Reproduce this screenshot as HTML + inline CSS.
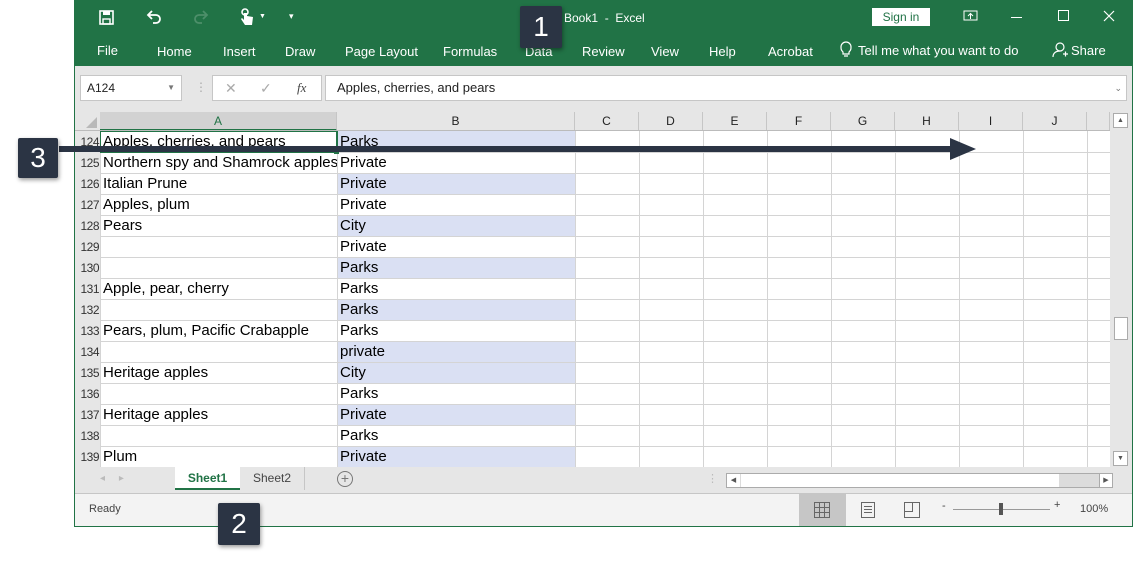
<!DOCTYPE html>
<html><head><meta charset="utf-8"><style>
*{margin:0;padding:0;box-sizing:border-box}
body{width:1133px;height:563px;background:#fff;position:relative;overflow:hidden;font-family:"Liberation Sans",sans-serif}
.a{position:absolute}
.g{color:#fff;font-size:12px}
.badge{position:absolute;background:#2b3444;color:#fff;font-size:28px;text-align:center;box-shadow:1px 2px 4px rgba(0,0,0,.4);border-radius:2px}
.cell{position:absolute;font-size:15px;color:#000;line-height:21px;white-space:nowrap;overflow:hidden}
.rh{position:absolute;left:75px;width:25px;font-size:12px;color:#333;text-align:right;padding-right:1px;line-height:22px;background:#e6e6e6;letter-spacing:-0.5px}
.ch{position:absolute;top:112px;height:19px;font-size:12px;text-align:center;line-height:19px;color:#222;border-right:1px solid #c6c6c6;background:#e6e6e6}
</style></head><body>
<div class="a" style="left:74px;top:0;width:1059px;height:527px;border:1px solid #217346;background:#e6e6e6"></div>
<div class="a" style="left:74px;top:0;width:1059px;height:66px;background:#217346"></div>
<svg class="a" style="left:98px;top:9px" width="18" height="18" viewBox="0 0 18 18"><rect x="2" y="2" width="13" height="13" fill="none" stroke="#fff" stroke-width="1.6"/><rect x="5" y="2" width="7" height="4" fill="#fff"/><rect x="5" y="10" width="7" height="5" fill="none" stroke="#fff" stroke-width="1.4"/></svg>
<svg class="a" style="left:145px;top:9px" width="18" height="16" viewBox="0 0 18 16"><path d="M4 6 H11 A4 4 0 0 1 11 14 H8" fill="none" stroke="#fff" stroke-width="1.8"/><path d="M7 2 L3 6 L7 10" fill="none" stroke="#fff" stroke-width="1.8"/></svg>
<svg class="a" style="left:192px;top:9px" width="18" height="16" viewBox="0 0 18 16"><path d="M14 6 H7 A4 4 0 0 0 7 14 H10" fill="none" stroke="#4d8f6a" stroke-width="1.8"/><path d="M11 2 L15 6 L11 10" fill="none" stroke="#4d8f6a" stroke-width="1.8"/></svg>
<svg class="a" style="left:240px;top:8px" width="14" height="18" viewBox="0 0 14 18"><circle cx="5" cy="4" r="3" fill="none" stroke="#fff" stroke-width="1.6"/><path d="M4 5V12L2 10L1 11L5 17H12L13 9L7 8V5Z" fill="#fff"/></svg>
<div class="a g" style="left:259px;top:13px;font-size:7px">▼</div>
<div class="a g" style="left:289px;top:11px;font-size:9px">▾</div>
<div class="a g" style="left:564px;top:11px;font-size:12px">Book1 &nbsp;- &nbsp;Excel</div>
<div class="a" style="left:872px;top:8px;width:58px;height:18px;background:#fff;color:#217346;font-size:12px;text-align:center;line-height:18px">Sign in</div>
<svg class="a" style="left:963px;top:10px" width="16" height="12"><rect x="1" y="1" width="13" height="9" fill="none" stroke="#fff"/><path d="M7.5 9 V4 M5 6 L7.5 3.5 L10 6" stroke="#fff" fill="none"/></svg>
<div class="a" style="left:1011px;top:17px;width:11px;height:1px;background:#fff"></div>
<div class="a" style="left:1058px;top:10px;width:11px;height:11px;border:1px solid #fff"></div>
<svg class="a" style="left:1103px;top:10px" width="12" height="12"><path d="M1 1L11 11M11 1L1 11" stroke="#fff" stroke-width="1.2"/></svg>
<div class="a g" style="left:97px;top:43px;font-size:13px">File</div>
<div class="a g" style="left:157px;top:44px;font-size:13px">Home</div>
<div class="a g" style="left:223px;top:44px;font-size:13px">Insert</div>
<div class="a g" style="left:285px;top:44px;font-size:13px">Draw</div>
<div class="a g" style="left:345px;top:44px;font-size:13px">Page Layout</div>
<div class="a g" style="left:443px;top:44px;font-size:13px">Formulas</div>
<div class="a g" style="left:525px;top:44px;font-size:13px">Data</div>
<div class="a g" style="left:582px;top:44px;font-size:13px">Review</div>
<div class="a g" style="left:651px;top:44px;font-size:13px">View</div>
<div class="a g" style="left:709px;top:44px;font-size:13px">Help</div>
<div class="a g" style="left:768px;top:44px;font-size:13px">Acrobat</div>
<svg class="a" style="left:840px;top:41px" width="12" height="17"><path d="M3 11C1 9 1 8 1 6A5 5 0 0 1 11 6C11 8 11 9 9 11V13H3Z M4 15H8" fill="none" stroke="#fff" stroke-width="1.2"/></svg>
<div class="a g" style="left:858px;top:43px;font-size:13px">Tell me what you want to do</div>
<svg class="a" style="left:1052px;top:41px" width="16" height="17"><circle cx="8" cy="6" r="4" fill="none" stroke="#fff" stroke-width="1.2"/><path d="M1 16C1 12 4 10 8 10 M11 13H16M13.5 10.5V15.5" fill="none" stroke="#fff" stroke-width="1.2"/></svg>
<div class="a g" style="left:1071px;top:43px;font-size:13px">Share</div>
<div class="a" style="left:80px;top:75px;width:102px;height:26px;background:#fff;border:1px solid #c6c6c6;font-size:12px;line-height:24px;padding-left:6px;color:#222">A124<span style="position:absolute;right:6px;font-size:8px;color:#777">▼</span></div>
<div class="a" style="left:195px;top:80px;color:#aaa;font-size:12px">⋮</div>
<div class="a" style="left:212px;top:75px;width:110px;height:26px;background:#fff;border:1px solid #c6c6c6;font-size:14px;line-height:24px;color:#aaa"><span style="position:absolute;left:12px">✕</span><span style="position:absolute;left:47px">✓</span><span style="position:absolute;left:84px;color:#444;font-family:'Liberation Serif';font-style:italic;font-size:13px">fx</span></div>
<div class="a" style="left:325px;top:75px;width:802px;height:26px;background:#fff;border:1px solid #c6c6c6;font-size:13px;line-height:24px;padding-left:11px;color:#222">Apples, cherries, and pears<span style="position:absolute;right:4px;font-size:9px;color:#777">⌄</span></div>
<div class="a" style="left:100px;top:131px;width:1010px;height:336px;background:#fff"></div>
<div class="a" style="left:75px;top:112px;width:25px;height:19px;background:#e6e6e6"><div style="position:absolute;right:3px;bottom:3px;width:0;height:0;border-left:11px solid transparent;border-bottom:11px solid #b9b9b9"></div></div>
<div class="ch" style="left:100px;width:237px;background:#d2d2d2;color:#217346;border-bottom:2px solid #217346">A</div>
<div class="ch" style="left:337px;width:238px">B</div>
<div class="ch" style="left:575px;width:64px">C</div>
<div class="ch" style="left:639px;width:64px">D</div>
<div class="ch" style="left:703px;width:64px">E</div>
<div class="ch" style="left:767px;width:64px">F</div>
<div class="ch" style="left:831px;width:64px">G</div>
<div class="ch" style="left:895px;width:64px">H</div>
<div class="ch" style="left:959px;width:64px">I</div>
<div class="ch" style="left:1023px;width:64px">J</div>
<div class="ch" style="left:1087px;width:23px"></div>
<div class="a" style="left:75px;top:130px;width:1035px;height:1px;background:#bbb"></div>
<svg class="a" style="left:75px;top:131px" width="1035" height="336">
<g fill="#dae0f3">
<rect x="262" y="0" width="238" height="21"/><rect x="262" y="42" width="238" height="21"/><rect x="262" y="84" width="238" height="21"/><rect x="262" y="126" width="238" height="21"/><rect x="262" y="168" width="238" height="21"/><rect x="262" y="210" width="238" height="42"/><rect x="262" y="273" width="238" height="21"/><rect x="262" y="315" width="238" height="21"/>
</g>
<g stroke="#d4d4d4" stroke-width="1">
<path d="M0 21.5H1035M0 42.5H1035M0 63.5H1035M0 84.5H1035M0 105.5H1035M0 126.5H1035M0 147.5H1035M0 168.5H1035M0 189.5H1035M0 210.5H1035M0 231.5H1035M0 252.5H1035M0 273.5H1035M0 294.5H1035M0 315.5H1035"/>
<path d="M25.5 0V336M262.5 0V336M500.5 0V336M564.5 0V336M628.5 0V336M692.5 0V336M756.5 0V336M820.5 0V336M884.5 0V336M948.5 0V336M1012.5 0V336"/>
</g>
<rect x="25" y="0" width="237" height="21" fill="none" stroke="#217346" stroke-width="2"/>
<rect x="259" y="18" width="5" height="5" fill="#217346"/>
</svg>
<div class="rh" style="top:131px">124</div><div class="rh" style="top:152px">125</div><div class="rh" style="top:173px">126</div><div class="rh" style="top:194px">127</div><div class="rh" style="top:215px">128</div><div class="rh" style="top:236px">129</div><div class="rh" style="top:257px">130</div><div class="rh" style="top:278px">131</div><div class="rh" style="top:299px">132</div><div class="rh" style="top:320px">133</div><div class="rh" style="top:341px">134</div><div class="rh" style="top:362px">135</div><div class="rh" style="top:383px">136</div><div class="rh" style="top:404px">137</div><div class="rh" style="top:425px">138</div><div class="rh" style="top:446px">139</div>
<div class="cell" style="left:103px;top:131px;width:233px">Apples, cherries, and pears</div>
<div class="cell" style="left:103px;top:152px;width:234px">Northern spy and Shamrock apples</div>
<div class="cell" style="left:103px;top:173px">Italian Prune</div>
<div class="cell" style="left:103px;top:194px">Apples, plum</div>
<div class="cell" style="left:103px;top:215px">Pears</div>
<div class="cell" style="left:103px;top:278px">Apple, pear, cherry</div>
<div class="cell" style="left:103px;top:320px">Pears, plum, Pacific Crabapple</div>
<div class="cell" style="left:103px;top:362px">Heritage apples</div>
<div class="cell" style="left:103px;top:404px">Heritage apples</div>
<div class="cell" style="left:103px;top:446px">Plum</div>
<div class="cell" style="left:340px;top:131px">Parks</div>
<div class="cell" style="left:340px;top:152px">Private</div>
<div class="cell" style="left:340px;top:173px">Private</div>
<div class="cell" style="left:340px;top:194px">Private</div>
<div class="cell" style="left:340px;top:215px">City</div>
<div class="cell" style="left:340px;top:236px">Private</div>
<div class="cell" style="left:340px;top:257px">Parks</div>
<div class="cell" style="left:340px;top:278px">Parks</div>
<div class="cell" style="left:340px;top:299px">Parks</div>
<div class="cell" style="left:340px;top:320px">Parks</div>
<div class="cell" style="left:340px;top:341px">private</div>
<div class="cell" style="left:340px;top:362px">City</div>
<div class="cell" style="left:340px;top:383px">Parks</div>
<div class="cell" style="left:340px;top:404px">Private</div>
<div class="cell" style="left:340px;top:425px">Parks</div>
<div class="cell" style="left:340px;top:446px">Private</div>
<div class="a" style="left:1111px;top:112px;width:19px;height:355px;background:#e6e6e6"></div>
<div class="a" style="left:1113px;top:113px;width:15px;height:15px;background:#fff;border:1px solid #ababab;font-size:7px;text-align:center;line-height:13px;color:#555">▲</div>
<div class="a" style="left:1114px;top:317px;width:14px;height:23px;background:#fff;border:1px solid #ababab"></div>
<div class="a" style="left:1113px;top:451px;width:15px;height:15px;background:#fff;border:1px solid #ababab;font-size:7px;text-align:center;line-height:13px;color:#555">▼</div>
<div class="a" style="left:75px;top:467px;width:1057px;height:27px;background:#e6e6e6;border-bottom:1px solid #c6c6c6"></div>
<div class="a" style="left:100px;top:473px;color:#bbb;font-size:10px">◂ &nbsp;&nbsp;&nbsp; ▸</div>
<div class="a" style="left:175px;top:467px;width:65px;height:23px;background:#fff;border-bottom:2px solid #217346;color:#217346;font-weight:bold;font-size:12px;text-align:center;line-height:23px">Sheet1</div>
<div class="a" style="left:240px;top:467px;width:65px;height:23px;font-size:12px;color:#444;text-align:center;line-height:23px;border-right:1px solid #c6c6c6">Sheet2</div>
<div class="a" style="left:337px;top:471px;width:16px;height:16px;border:1px solid #777;border-radius:50%;color:#777;font-size:14px;text-align:center;line-height:13px">+</div>
<div class="a" style="left:707px;top:472px;color:#bbb;font-size:11px">⋮</div>
<div class="a" style="left:726px;top:473px;width:387px;height:15px;background:#dcdcdc;border:1px solid #ababab"></div>
<div class="a" style="left:741px;top:474px;width:318px;height:13px;background:#fff"></div>
<div class="a" style="left:727px;top:474px;width:13px;height:13px;background:#fff;font-size:7px;color:#555;text-align:center;line-height:13px">◀</div>
<div class="a" style="left:1099px;top:474px;width:13px;height:13px;background:#fff;border-left:1px solid #ababab;font-size:7px;color:#555;text-align:center;line-height:13px">▶</div>
<div class="a" style="left:75px;top:494px;width:1057px;height:32px;background:#f3f3f3"></div>
<div class="a" style="left:89px;top:503px;font-size:11px;color:#444">Ready</div>
<div class="a" style="left:799px;top:494px;width:47px;height:32px;background:#c6c6c6"></div>
<svg class="a" style="left:814px;top:502px" width="16" height="16"><path d="M.5 .5H15.5V15.5H.5ZM5.5 .5V15.5M10.5 .5V15.5M.5 5.5H15.5M.5 10.5H15.5" fill="none" stroke="#666"/></svg>
<svg class="a" style="left:860px;top:502px" width="16" height="16"><path d="M1.5 .5H14.5V15.5H1.5Z M4 4.5H12M4 7.5H12M4 10.5H12" fill="none" stroke="#666"/></svg>
<svg class="a" style="left:904px;top:502px" width="16" height="16"><path d="M.5 .5H15.5V15.5H.5Z M8.5 .5V9.5H.5" fill="none" stroke="#666"/></svg>
<div class="a" style="left:942px;top:500px;font-size:11px;color:#444">-</div>
<div class="a" style="left:953px;top:509px;width:97px;height:1px;background:#999"></div>
<div class="a" style="left:999px;top:503px;width:4px;height:12px;background:#555"></div>
<div class="a" style="left:1054px;top:499px;font-size:11px;color:#444">+</div>
<div class="a" style="left:1080px;top:503px;font-size:11px;color:#444">100%</div>
<div class="a" style="left:59px;top:146px;width:895px;height:6px;background:#2b3444"></div>
<svg class="a" style="left:950px;top:138px" width="26" height="22"><path d="M0 0L26 11L0 22Z" fill="#2b3444"/></svg>
<div class="badge" style="left:520px;top:6px;width:42px;height:42px;line-height:42px">1</div>
<div class="badge" style="left:218px;top:503px;width:42px;height:42px;line-height:42px">2</div>
<div class="badge" style="left:18px;top:138px;width:40px;height:40px;line-height:40px">3</div>
</body></html>
